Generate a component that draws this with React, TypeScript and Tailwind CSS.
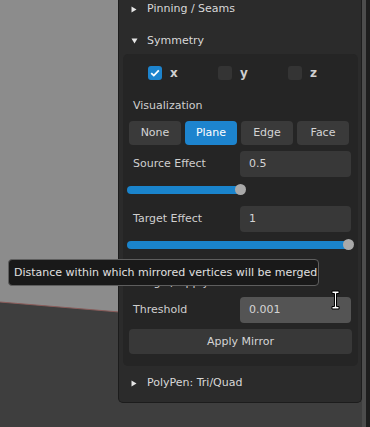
import React from "react"

function Arrow({ open }: { open?: boolean }) {
  return open ? (
    <svg width="7" height="6" viewBox="0 0 7 6" className="shrink-0">
      <path d="M0.5 0.5 L6.5 0.5 L3.5 5.5 Z" fill="#e6e6e6" />
    </svg>
  ) : (
    <svg width="7" height="7" viewBox="0 0 7 7" className="shrink-0">
      <path d="M0.5 0.5 L5.5 3.5 L0.5 6.5 Z" fill="#e6e6e6" />
    </svg>
  )
}

function Header({ label, open }: { label: string; open?: boolean }) {
  return (
    <div className="flex h-[24px] items-center gap-[9px] pl-[12px] text-[11px] text-[#d8d8d8]">
      <Arrow open={open} />
      <span>{label}</span>
    </div>
  )
}

function Check({ label, checked }: { label: string; checked?: boolean }) {
  return (
    <div className="flex w-[75px] items-center gap-[8px]">
      <div
        className={`flex h-[14px] w-[14px] items-center justify-center rounded-[3px] ${
          checked ? "bg-[#1d84ce]" : "bg-[#343434]"
        }`}
      >
        {checked && (
          <svg width="10" height="8" viewBox="0 0 10 8">
            <path d="M1.2 4.2 L3.8 6.6 L8.8 1.4" fill="none" stroke="#fff" strokeWidth="1.8" />
          </svg>
        )}
      </div>
      <span className="text-[12px] font-semibold leading-none text-[#d0d0d0]">{label}</span>
    </div>
  )
}

function Field({ label, value, hover }: { label: string; value: string; hover?: boolean }) {
  return (
    <div className="flex h-[26px] items-center pl-[10px]">
      <span className="w-[107px] pt-[1px] text-[11px] text-[#cfcfcf]">{label}</span>
      <div
        className={`flex h-[26px] w-[111px] items-center rounded-[4px] pl-[9px] pt-[1px] text-[11px] text-[#d4d4d4] ${
          hover ? "bg-[#545454]" : "bg-[#383838]"
        }`}
      >
        {value}
      </div>
    </div>
  )
}

function Slider({ value }: { value: number }) {
  const knob = 5.5 + value * 216
  return (
    <div className="relative ml-[4px] h-[11px] w-[227px]">
      <div className="absolute left-0 top-[2px] h-[8px] rounded-full bg-[#1a84cc]" style={{ width: knob }} />
      <div
        className="absolute top-0 h-[11px] w-[11px] rounded-full bg-[#a9a9a9]"
        style={{ left: knob - 5.5 }}
      />
    </div>
  )
}

export default function App() {
  const modes = ["None", "Plane", "Edge", "Face"]
  return (
    <div className="relative h-[427px] w-[370px] overflow-hidden font-['DejaVu_Sans',sans-serif]">
      <svg className="absolute inset-0" width="370" height="427">
        <rect width="370" height="427" fill="#3e3e3e" />
        <polygon points="0,0 370,0 370,333 0,302" fill="#8c8c8c" />
        <line x1="0" y1="302" x2="370" y2="333" stroke="#8a5c5a" strokeWidth="1.2" />
      </svg>

      <div className="relative flex h-full">
        <div className="w-[118px] shrink-0" />
        <div className="flex h-[403px] w-[244px] shrink-0 flex-col rounded-b-[5px] border-x border-b border-[#1c1c1c] bg-[#2b2b2b]">
          <div className="-mt-[3px]">
            <Header label="Pinning / Seams" />
          </div>
          <div className="mt-[8px]">
            <Header label="Symmetry" open />
          </div>
          <div className="ml-[4px] mt-[1px] flex h-[312px] w-[235px] flex-col rounded-[5px] bg-[#252525]">
            <div className="mt-[12px] flex h-[14px] pl-[25px]">
              <Check label="x" checked />
              <Check label="y" />
              <Check label="z" />
            </div>
            <div className="mt-[18px] flex h-[16px] items-center pl-[10px] text-[11px] text-[#cfcfcf]">
              Visualization
            </div>
            <div className="mt-[7px] flex gap-[4px] pl-[6px]">
              {modes.map((m) => (
                <div
                  key={m}
                  className={`flex h-[24px] w-[52px] items-center justify-center rounded-[4px] pt-[1px] text-[11px] ${
                    m === "Plane" ? "bg-[#1d84ce] text-white" : "bg-[#3a3a3a] text-[#d4d4d4]"
                  }`}
                >
                  {m}
                </div>
              ))}
            </div>
            <div className="mt-[6px]">
              <Field label="Source Effect" value="0.5" />
            </div>
            <div className="mt-[7px]">
              <Slider value={0.5} />
            </div>
            <div className="mt-[11px]">
              <Field label="Target Effect" value="1" />
            </div>
            <div className="mt-[7px]">
              <Slider value={1} />
            </div>
            <div className="mt-[25px] flex h-[16px] items-center pl-[10px] text-[11px] text-[#cfcfcf]">
              Merge / Apply
            </div>
            <div className="mt-[6px]">
              <Field label="Threshold" value="0.001" hover />
            </div>
            <div className="ml-[6px] mt-[6px] flex h-[25px] w-[223px] items-center justify-center rounded-[4px] bg-[#383838] pt-[1px] text-[11px] text-[#d4d4d4]">
              Apply Mirror
            </div>
          </div>
          <div className="mt-[5px]">
            <Header label="PolyPen: Tri/Quad" />
          </div>
        </div>
        <div className="h-full w-[4px] shrink-0 bg-[#4c4c4c]" />
        <div className="h-full w-[4px] shrink-0 bg-[#1d1d1d]" />
      </div>

      <div className="absolute left-[8px] top-[259px] flex h-[27px] w-[311px] items-center rounded-[4px] border border-[#5e5e5e] bg-[#191919] pl-[5px] pt-[1px] text-[11px] text-[#e0e0e0]">
        Distance within which mirrored vertices will be merged
      </div>

      <svg className="absolute left-[331px] top-[290px]" width="9" height="20" viewBox="0 0 9 20">
        <path
          d="M1 1 H8 V3.5 H5.5 V16.5 H8 V19 H1 V16.5 H3.5 V3.5 H1 Z"
          fill="#fff"
          stroke="#000"
          strokeWidth="1"
        />
      </svg>
    </div>
  )
}
